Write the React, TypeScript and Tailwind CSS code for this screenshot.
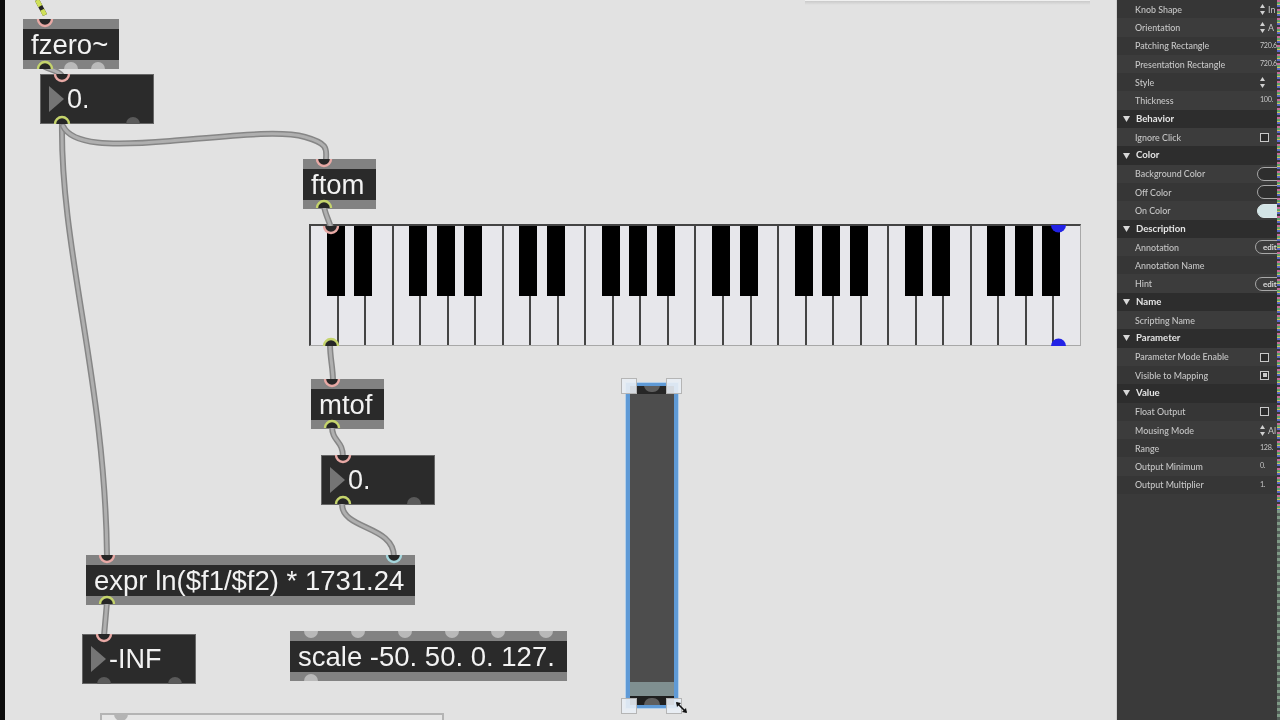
import type { ReactNode } from "react";

const WHITE_KEYS = Array.from({ length: 28 }, (_, i) => i);
// a white key carries a black key on its right edge, except E and B
const hasBlack = (i: number) => i % 7 !== 2 && i % 7 !== 6 && i !== 27;

type PortKind = "in" | "out" | "cold" | "idle";

const ringColor: Record<PortKind, string> = {
  in: "#e8a9a5",
  out: "#c5d46c",
  cold: "#a5d6dc",
  idle: "#b5b5b5",
};

// half circle that sits on the edge of a box
function Port({ x, y, kind, up }: { x: number; y: number; kind: PortKind; up?: boolean }) {
  const r = 7;
  const d = up
    ? `M${x - r} ${y} A${r} ${r} 0 0 1 ${x + r} ${y}`
    : `M${x - r} ${y} A${r} ${r} 0 0 0 ${x + r} ${y}`;
  if (kind === "idle") return <path d={d + "Z"} fill="#b9b9b9" />;
  return (
    <>
      <path d={d + "Z"} fill="#262626" />
      <path d={d} fill="none" stroke={ringColor[kind]} strokeWidth="2.4" />
    </>
  );
}

function Wire({ d }: { d: string }) {
  return (
    <>
      <path d={d} fill="none" stroke="#868686" strokeWidth="6" strokeLinecap="round" />
      <path d={d} fill="none" stroke="#afafaf" strokeWidth="3" strokeLinecap="round" />
    </>
  );
}

function ObjectBox({ className, children }: { className: string; children: ReactNode }) {
  return (
    <div className={`absolute flex h-[50px] flex-col bg-[#828282] ${className}`}>
      <div className="h-[10px] shrink-0" />
      <div className="flex h-[31px] items-center whitespace-nowrap bg-[#2a2a2a] pl-[8px] text-[27.5px] text-[#f2f2f2]">
        {children}
      </div>
    </div>
  );
}

function NumberBox({ className, children }: { className: string; children: ReactNode }) {
  return (
    <div className={`absolute flex h-[50px] w-[114px] items-center border border-[#666] bg-[#2b2b2b] pl-[8px] text-[27px] text-[#f2f2f2] ${className}`}>
      <span className="h-0 w-0 border-y-[13px] border-l-[15px] border-y-transparent border-l-[#757575]" />
      <span className="ml-[3px]">{children}</span>
    </div>
  );
}

function Keyboard() {
  return (
    <div className="absolute left-[309px] top-[224px] flex h-[122px] w-[772px] border-t-2 border-l-2 border-r border-b border-t-[#444] border-l-[#444] border-r-[#a8a8a8] border-b-[#a8a8a8] bg-[#e7e7eb]">
      {WHITE_KEYS.map((i) => (
        <div key={i} className={`relative h-full flex-1 ${i < 27 ? "border-r-2 border-[#444]" : ""}`}>
          {hasBlack(i) && (
            <div className="absolute right-[-8px] top-0 z-10 h-[70px] w-[18px] bg-black" />
          )}
        </div>
      ))}
    </div>
  );
}

function Handle({ className }: { className: string }) {
  return (
    <div className={`absolute z-10 h-[16px] w-[16px] border border-[#b5b5b5] bg-[#e9eef5]/90 ${className}`} />
  );
}

function SliderObject() {
  return (
    <div className="absolute left-[626px] top-[383px] h-[325px] w-[52px] border-x-[4px] border-y-[3px] border-[#5f9ad6] outline-[1.5px] outline-[#b4d0ea]">
      <div className="flex h-full flex-col bg-[#4d4d4d]">
        <div className="relative h-[8px] overflow-hidden bg-[#262626]">
          <div className="absolute left-[14px] top-[-8px] h-[14px] w-[16px] rounded-full bg-[#5e5e5e]" />
        </div>
        <div className="flex-1" />
        <div className="h-[14px] bg-[#7f8f90]" />
        <div className="relative h-[9px] overflow-hidden bg-[#1f1f1f]">
          <div className="absolute left-[14px] top-[2px] h-[14px] w-[16px] rounded-full bg-[#5e5e5e]" />
        </div>
      </div>
    </div>
  );
}

function Patcher() {
  return (
    <div className="relative h-full w-[1116px] shrink-0 overflow-hidden bg-[#e2e2e2] font-['Liberation_Sans',sans-serif]">
      <div className="absolute left-0 top-0 h-full w-[5px] bg-[#0c0c0c]" />
      {/* edge of a floating window above the patcher */}
      <div className="absolute right-[26px] top-0 h-[5px] w-[285px] bg-gradient-to-b from-[#c4c4c4] to-[#e2e2e2]" />
      <div className="absolute right-[26px] top-0 h-[1px] w-[285px] bg-[#f0f0f0]" />

      <ObjectBox className="left-[23px] top-[19px] w-[96px]">fzero~</ObjectBox>
      <NumberBox className="left-[40px] top-[74px]">0.</NumberBox>
      <ObjectBox className="left-[303px] top-[159px] w-[73px]">ftom</ObjectBox>
      <Keyboard />
      <ObjectBox className="left-[311px] top-[379px] w-[73px]">mtof</ObjectBox>
      <NumberBox className="left-[321px] top-[455px]">0.</NumberBox>
      <ObjectBox className="left-[86px] top-[555px] w-[329px]">expr ln($f1/$f2) * 1731.24</ObjectBox>
      <NumberBox className="left-[82px] top-[634px]">-INF</NumberBox>
      <ObjectBox className="left-[290px] top-[631px] w-[277px]">scale -50. 50. 0. 127.</ObjectBox>
      <div className="absolute left-[100px] top-[713px] h-[20px] w-[344px] border-2 border-[#b4b4b4] bg-[#e6e6e6]" />

      <SliderObject />
      <Handle className="left-[621px] top-[378px]" />
      <Handle className="left-[666px] top-[378px]" />
      <Handle className="left-[621px] top-[698px]" />
      <Handle className="left-[666px] top-[698px]" />

      <svg className="absolute left-0 top-0 z-20" width="1116" height="720" viewBox="0 0 1116 720">
        {/* signal cable coming in from above */}
        <path d="M37 0L45 15" stroke="#222" strokeWidth="4.5" fill="none" />
        <path d="M37 0L45 15" stroke="#cfe05a" strokeWidth="4.5" strokeDasharray="7 4" fill="none" />

        <Wire d="M45 67C50 70 58 70 62 76" />
        <Wire d="M62 122C60 250 105 380 107 556" />
        <Wire d="M63 126C72 145 110 146 170 141S280 130 305 137S326 150 326 160" />
        <Wire d="M324 206C325 214 329 220 331 228" />
        <Wire d="M330 344C330 358 333 368 333 381" />
        <Wire d="M332 426C332 442 343 440 343 457" />
        <Wire d="M342 504C342 530 394 525 394 557" />
        <Wire d="M107 602L104 636" />

        <Port x={45} y={19} kind="in" />
        <Port x={45} y={69} kind="out" up />
        <Port x={71} y={69} kind="idle" up />
        <Port x={98} y={69} kind="idle" up />
        <Port x={62} y={74} kind="in" />
        <Port x={62} y={124} kind="out" up />
        <Port x={324} y={159} kind="in" />
        <Port x={324} y={208} kind="out" up />
        <Port x={331} y={226} kind="in" />
        <Port x={331} y={346} kind="out" up />
        <Port x={332} y={379} kind="in" />
        <Port x={332} y={428} kind="out" up />
        <Port x={343} y={455} kind="in" />
        <Port x={343} y={504} kind="out" up />
        <Port x={107} y={555} kind="in" />
        <Port x={394} y={555} kind="cold" />
        <Port x={107} y={604} kind="out" up />
        <Port x={104} y={634} kind="in" />

        <path d="M97 684A7 7 0 0 1 111 684Z" fill="#5a5a5a" />
        <path d="M168 684A7 7 0 0 1 182 684Z" fill="#5a5a5a" />
        <path d="M126 124A7 7 0 0 1 140 124Z" fill="#5a5a5a" />
        <path d="M407 504A7 7 0 0 1 421 504Z" fill="#5a5a5a" />

        {[311, 358, 405, 452, 498, 546].map((x) => (
          <Port key={x} x={x} y={631} kind="idle" />
        ))}
        <Port x={311} y={681} kind="idle" up />
        <path d="M114 714A7 7 0 0 0 128 714Z" fill="#b4b4b4" />

        {/* played note */}
        <path d="M1051 225A7.5 7.5 0 0 0 1066 225Z" fill="#2222e6" />
        <path d="M1051 346A7.5 7.5 0 0 1 1066 346Z" fill="#2222e6" />

        {/* resize cursor */}
        <path d="M677 703L686 712" stroke="#111" strokeWidth="1.6" />
        <path d="M676 702L681 703L677 707Z M687 713L682 712L686 708Z" fill="#111" />
      </svg>
    </div>
  );
}

type Row =
  | { type: "header"; label: string }
  | { type: "text"; label: string; value?: string }
  | { type: "stepper"; label: string; value?: string }
  | { type: "check"; label: string; on?: boolean }
  | { type: "color"; label: string; light?: boolean }
  | { type: "edit"; label: string };

const rows: Row[] = [
  { type: "stepper", label: "Knob Shape", value: "In" },
  { type: "stepper", label: "Orientation", value: "A" },
  { type: "text", label: "Patching Rectangle", value: "720.6" },
  { type: "text", label: "Presentation Rectangle", value: "720.6" },
  { type: "stepper", label: "Style" },
  { type: "text", label: "Thickness", value: "100." },
  { type: "header", label: "Behavior" },
  { type: "check", label: "Ignore Click" },
  { type: "header", label: "Color" },
  { type: "color", label: "Background Color" },
  { type: "color", label: "Off Color" },
  { type: "color", label: "On Color", light: true },
  { type: "header", label: "Description" },
  { type: "edit", label: "Annotation" },
  { type: "text", label: "Annotation Name" },
  { type: "edit", label: "Hint" },
  { type: "header", label: "Name" },
  { type: "text", label: "Scripting Name" },
  { type: "header", label: "Parameter" },
  { type: "check", label: "Parameter Mode Enable" },
  { type: "check", label: "Visible to Mapping", on: true },
  { type: "header", label: "Value" },
  { type: "check", label: "Float Output" },
  { type: "stepper", label: "Mousing Mode", value: "Al" },
  { type: "text", label: "Range", value: "128." },
  { type: "text", label: "Output Minimum", value: "0." },
  { type: "text", label: "Output Multiplier", value: "1." },
];

function Stepper() {
  return (
    <svg width="5" height="11" viewBox="0 0 5 11" className="shrink-0">
      <path d="M2.5 0L5 4H0Z M2.5 11L0 7H5Z" fill="#d0d0d0" />
    </svg>
  );
}

function RowValue({ row }: { row: Row }) {
  switch (row.type) {
    case "text":
      return <span className="text-[7.2px] tracking-[-0.3px]">{row.value}</span>;
    case "stepper":
      return (
        <span className="flex items-center gap-[3px]">
          <Stepper />
          <span>{row.value}</span>
        </span>
      );
    case "check":
      return (
        <span className="flex h-[9px] w-[9px] items-center justify-center border border-[#c8c8c8] bg-[#2b2b2b]">
          {row.on && <span className="h-[4px] w-[4px] bg-[#c8c8c8]" />}
        </span>
      );
    case "color":
      return (
        <span
          className={`ml-[-3px] block h-[14px] w-[40px] shrink-0 rounded-l-[7px] border ${
            row.light ? "border-[#dbe9ea] bg-[#d3e5e6]" : "border-[#a8a8a8] bg-[#2e2e2e]"
          }`}
        />
      );
    case "edit":
      return (
        <span className="ml-[-5px] flex h-[14px] w-[40px] shrink-0 items-center rounded-l-[7px] border border-[#a8a8a8] pl-[7px] text-[8px] font-bold text-[#dcdcdc]">
          edit
        </span>
      );
    default:
      return null;
  }
}

function Inspector() {
  return (
    <div className="flex h-full flex-1 overflow-hidden border-l border-[#cfcfcf] bg-[#3a3a3a] font-['Lato',sans-serif] text-[8.9px] text-[#c6c6c6]">
      <div className="min-w-0 flex-1 overflow-hidden">
        {rows.map((row, i) =>
          row.type === "header" ? (
            <div
              key={row.label}
              className="flex h-[18.3px] items-center gap-[6px] bg-[#2d2d2d] pl-[6px] text-[9.6px] font-bold text-[#e4e4e4]"
            >
              <svg width="7" height="6" viewBox="0 0 7 6" className="shrink-0">
                <path d="M0 0H7L3.5 6Z" fill="#d8d8d8" />
              </svg>
              {row.label}
            </div>
          ) : (
            <div
              key={row.label}
              className={`flex h-[18.3px] items-center pt-[0.5px] ${i % 2 === 0 ? "bg-[#363636]" : "bg-[#3c3c3c]"}`}
            >
              <span className="w-[143px] shrink-0 truncate pl-[18px] font-medium">{row.label}</span>
              <span className="flex min-w-0 items-center whitespace-nowrap">
                <RowValue row={row} />
              </span>
            </div>
          ),
        )}
      </div>
      {/* capture noise along the right edge */}
      <div className="flex h-full w-[3px] shrink-0 flex-col">
        <div className="h-[510px] bg-[repeating-linear-gradient(180deg,#c86a9a_0px,#c86a9a_2px,#5aa56a_2px,#5aa56a_4px,#d8c060_4px,#d8c060_5px,#5a6ac8_5px,#5a6ac8_7px,#3a3a3a_7px,#3a3a3a_9px)]" />
        <div className="flex-1 bg-[repeating-linear-gradient(180deg,#7f9a86_0px,#7f9a86_3px,#55605a_3px,#55605a_6px)]" />
      </div>
    </div>
  );
}

export default function App() {
  return (
    <div className="flex h-[720px] w-[1280px] overflow-hidden blur-[0.4px]">
      <Patcher />
      <Inspector />
    </div>
  );
}
